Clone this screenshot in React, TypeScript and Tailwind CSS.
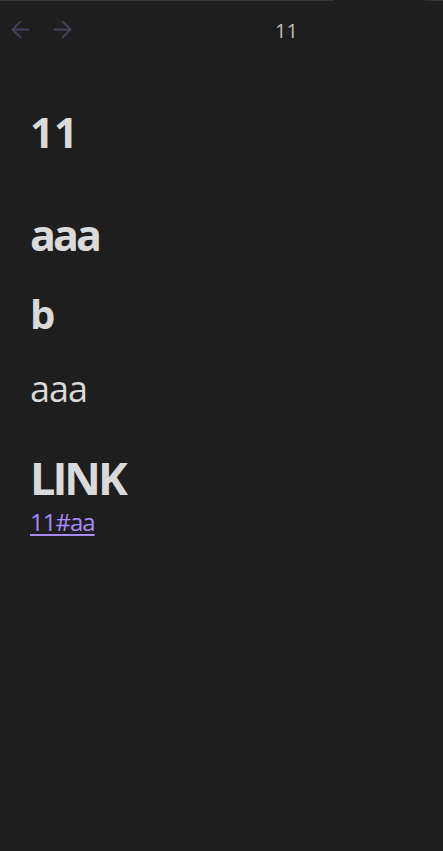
import React from "react";

const ArrowLeft = () => (
  <svg width="27" height="27" viewBox="0 0 24 24" fill="none" stroke="currentColor" strokeWidth="1.75" strokeLinecap="round" strokeLinejoin="round">
    <path d="m12 19-7-7 7-7" />
    <path d="M19 12H5" />
  </svg>
);

const ArrowRight = () => (
  <svg width="27" height="27" viewBox="0 0 24 24" fill="none" stroke="currentColor" strokeWidth="1.75" strokeLinecap="round" strokeLinejoin="round">
    <path d="M5 12h14" />
    <path d="m12 5 7 7-7 7" />
  </svg>
);

export default function App() {
  return (
    <div
      className="w-[443px] h-[851px] bg-[#1e1e1e] overflow-hidden flex flex-col"
      style={{ fontFamily: '"Open Sans", "Noto Sans", sans-serif' }}
    >
      <div className="flex h-px">
        <div className="w-[334px] bg-[#363636]" />
        <div className="flex-1" />
        <div className="w-[18px] bg-[#363636]" />
      </div>
      <div className="flex items-center h-[56px]">
        <div className="flex items-center gap-[15px] pl-[7px] text-[#42425a]">
          <ArrowLeft />
          <ArrowRight />
        </div>
        <div className="pl-[199px] pt-[3px] text-[20px] leading-none text-[#bdbdbd]">11</div>
      </div>
      <div className="flex flex-col pl-[30px] text-[#dadada]">
        <h1 className="mt-[54px] text-[42px] font-bold leading-none">11</h1>
        <h2 className="mt-[60px] text-[43px] font-bold leading-none tracking-[-3px]">aaa</h2>
        <h3 className="mt-[38px] text-[40px] font-bold leading-none">b</h3>
        <p className="mt-[37px] text-[36px] font-medium leading-none tracking-[-1px]">aaa</p>
        <h2 className="mt-[48px] text-[45px] font-bold leading-none tracking-[-3px]">LINK</h2>
        <a href="#" className="mt-[10px] text-[24px] leading-none text-[#a88bfa] underline underline-offset-[3px] tracking-[-1px] w-fit">
          11#aa
        </a>
      </div>
    </div>
  );
}
